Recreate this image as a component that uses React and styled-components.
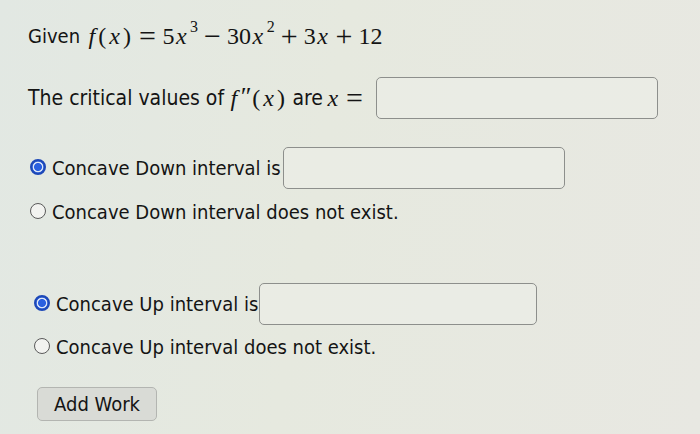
import React from "react";
import styled, { createGlobalStyle } from "styled-components";

const Global = createGlobalStyle`
  html, body {
    margin: 0;
    padding: 0;
    background: #e4e8e1;
  }
  body {
    width: 700px;
    height: 434px;
    overflow: hidden;
    font-family: "DejaVu Sans Condensed", "DejaVu Sans", Verdana, sans-serif;
    color: #141414;
  }
`;

const Page = styled.div`
  width: 700px;
  height: 434px;
  box-sizing: border-box;
  padding: 22px 0 0 28px;
  background: linear-gradient(100deg, #e2e8e3 0%, #e6e9df 45%, #e8e8e2 100%);
`;

const Line = styled.div`
  display: flex;
  align-items: center;
  font-size: ${(p) => p.fs || 20}px;
  height: ${(p) => p.h || 28}px;
  margin-top: ${(p) => p.mt || 0}px;
  margin-left: ${(p) => p.ml || 0}px;
  white-space: nowrap;
`;

const Math = styled.span`
  font-family: "Liberation Serif", "DejaVu Serif", serif;
  font-size: 24px;
  margin: 0 ${(p) => p.r || 6}px 0 ${(p) => p.l || 6}px;
`;

const I = styled.i`
  font-style: italic;
  padding: 0 1.5px;
`;

const Paren = styled.span`
  padding: 0 1.5px;
`;

const Op = styled.span`
  display: inline-block;
  width: ${(p) => p.w || 19}px;
  margin: 0 ${(p) => p.m || 5}px;
  text-align: center;
  font-size: 30px;
  line-height: 0;
  vertical-align: -2px;
`;

const Sup = styled.sup`
  font-size: 16px;
  vertical-align: 12px;
  line-height: 0;
  margin-left: 2px;
`;

const Primes = styled.span`
  display: inline-block;
  width: 10px;
  margin-left: 2px;
  font-size: 26px;
  line-height: 0;
  vertical-align: 1px;
`;

const Field = styled.div`
  width: ${(p) => p.w}px;
  height: 42px;
  margin-left: ${(p) => p.gap || 0}px;
  border: 1.5px solid #8d8f8c;
  border-radius: 5px;
  background: rgba(236, 238, 232, 0.6);
  box-sizing: border-box;
`;

const Radio = styled.span`
  width: 16px;
  height: 16px;
  border-radius: 50%;
  box-sizing: border-box;
  margin: 0 6px 2px 0;
  flex-shrink: 0;
  border: ${(p) => (p.on ? "2px solid #1d48b8" : "1.5px solid #5a5a5a")};
  background: ${(p) =>
    p.on
      ? "radial-gradient(circle, #2a60e0 0 3.6px, #dfe7f7 4.4px 5px, #3b6ad8 5.6px)"
      : "#f2f3f0"};
`;

const Button = styled.div`
  margin: 26px 0 0 9px;
  width: 120px;
  height: 34px;
  display: flex;
  align-items: center;
  justify-content: center;
  font-size: 20px;
  background: #d9dbd6;
  border: 1px solid #b3b5b1;
  border-radius: 5px;
  box-sizing: border-box;
`;

export default function App() {
  return (
    <>
      <Global />
      <Page>
        <Line>
          Given
          <Math l={7}>
            <I>f</I>
            <Paren>(</Paren>
            <I>x</I>
            <Paren>)</Paren>
            <Op w={20} m={5}>=</Op>5<I>x</I>
            <Sup>3</Sup>
            <Op m={5}>−</Op>30<I>x</I>
            <Sup>2</Sup>
            <Op>+</Op>3<I>x</I>
            <Op>+</Op>12
          </Math>
        </Line>
        <Line mt={27} h={42} fs={21}>
          The critical values of
          <Math l={5} r={6}>
            <I>f</I>
            <Primes>″</Primes>
            <Paren>(</Paren>
            <I>x</I>
            <Paren>)</Paren>
          </Math>
          are
          <Math l={3} r={6}>
            <I>x</I>
            <Op w={20} m={5}>=</Op>
          </Math>
          <Field w={282} />
        </Line>
        <Line mt={28} h={42} ml={2}>
          <Radio on />
          Concave Down interval is
          <Field w={282} gap={2} />
        </Line>
        <Line mt={9} h={28} ml={2}>
          <Radio />
          Concave Down interval does not exist.
        </Line>
        <Line mt={57} h={42} ml={6}>
          <Radio on />
          Concave Up interval is
          <Field w={278} gap={1} />
        </Line>
        <Line mt={8} h={28} ml={6}>
          <Radio />
          Concave Up interval does not exist.
        </Line>
        <Button>Add Work</Button>
      </Page>
    </>
  );
}
